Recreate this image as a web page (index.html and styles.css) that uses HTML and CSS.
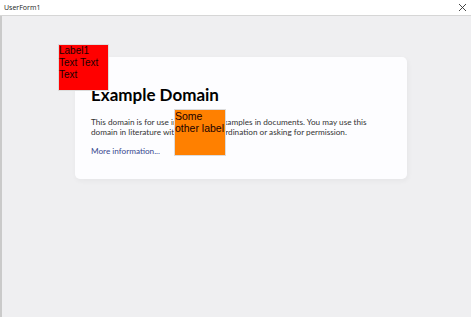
FILE: index.html
```html
<!DOCTYPE html>
<html lang="en">
<head>
  <meta charset="UTF-8">
  <title>UserForm1</title>
  <link rel="stylesheet" href="styles.css">
</head>
<body>
  <div class="window">
    <div class="titlebar">
      <span class="title">UserForm1</span>
      <svg class="close" width="9" height="9" viewBox="0 0 9 9">
        <path d="M1 1 L8 8 M8 1 L1 8" stroke="#333" stroke-width="0.9" fill="none"/>
      </svg>
    </div>

    <!-- area of the form, the web control fills it -->
    <div class="client">
      <div class="card">
        <h1>Example Domain</h1>
        <p>This domain is for use in illustrative examples in documents. You may use this
        domain in literature without prior coordination or asking for permission.</p>
        <p><a href="#">More information...</a></p>
      </div>

      <div class="label label-red">Label1 Text Text Text</div>
      <div class="label label-orange">Some other label</div>
    </div>
  </div>
</body>
</html>
```

FILE: styles.css
```css
body {
  margin: 0;
  font-family: "Open Sans", "Noto Sans", sans-serif;
  background-color: #fff;
}
.window {
  width: 471px;
  height: 317px;
  display: flex;
  flex-direction: column;
}
.titlebar {
  height: 15px;
  display: flex;
  align-items: center;
  justify-content: space-between;
  padding: 0 4px 0 4px;
  background-color: #fff;
  border-bottom: 1px solid #d6d6d6;
}
.title {
  font-size: 7px;
  color: #222;
}
.close {
  margin-right: 0;
}
.client {
  position: relative;
  flex: 1;
  background-color: #efeff1;
  border-left: 2px solid #cacaca;
  padding-top: 41px;
}
.card {
  width: 300px;
  margin: 0 0 0 73px;
  padding: 16px 16px 14px 16px;
  background-color: #fdfdff;
  border-radius: 5px;
  box-shadow: 1px 2px 4px 1px rgba(0, 0, 0, 0.03);
  font-family: Lato, "Open Sans", sans-serif;
}
.card h1 {
  margin: 12px 0 12px 0;
  font-size: 17px;
  font-weight: 700;
  color: #000;
  line-height: 20px;
}
.card p {
  margin: 0 0 9px 0;
  font-size: 8.2px;
  line-height: 10px;
  color: #333;
}
.card a {
  color: #38488f;
  text-decoration: none;
}
.label {
  position: absolute;
  font-family: "Liberation Sans", Arial, sans-serif;
  font-size: 10px;
  line-height: 12px;
  color: #1a0000;
  border: 1px solid #dcdcdc;
  box-sizing: border-box;
}
.label-red {
  left: 56px;
  top: 28px;
  width: 51px;
  height: 47px;
  background-color: #ff0000;
}
.label-orange {
  left: 172px;
  top: 93px;
  width: 52px;
  height: 47px;
  background-color: #ff8000;
  font-size: 10.5px;
}
```
